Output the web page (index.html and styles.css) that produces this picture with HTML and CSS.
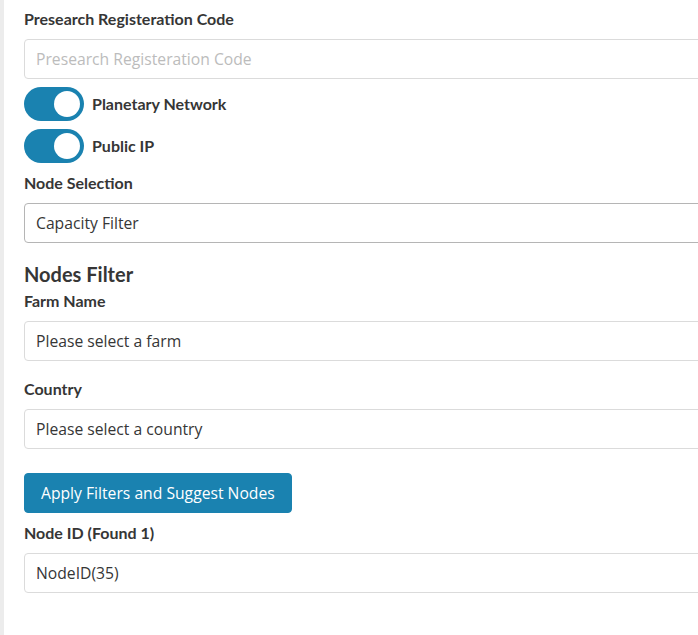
FILE: index.html
```
<!DOCTYPE html>
<html>
<head>
<meta charset="utf-8">
<link rel="stylesheet" href="styles.css">
</head>
<body>
<div class="page">
  <form class="form">
    <label class="label">Presearch Registeration Code</label>
    <input class="input" type="text" placeholder="Presearch Registeration Code">

    <div class="toggle-row first">
      <span class="switch"><span class="knob"></span></span>
      <span class="toggle-label">Planetary Network</span>
    </div>
    <div class="toggle-row">
      <span class="switch"><span class="knob"></span></span>
      <span class="toggle-label">Public IP</span>
    </div>

    <label class="label sel-label">Node Selection</label>
    <div class="input select">Capacity Filter</div>

    <h3 class="heading">Nodes Filter</h3>
    <label class="label farm-label">Farm Name</label>
    <div class="input">Please select a farm</div>

    <label class="label country-label">Country</label>
    <div class="input">Please select a country</div>

    <button class="btn" type="button">Apply Filters and Suggest Nodes</button>

    <label class="label node-label">Node ID (Found 1)</label>
    <div class="input">NodeID(35)</div>
  </form>
</div>
</body>
</html>
```
FILE: styles.css
```
html, body {
  margin: 0;
  padding: 0;
  overflow: hidden;
  background: #ffffff;
}
.page {
  border-left: 4px solid #ececec;
  min-height: 635px;
  box-sizing: border-box;
  padding: 8px 0 0 20px;
}
.form {
  display: flex;
  flex-direction: column;
  align-items: flex-start;
  width: 760px;
}
.label {
  display: block;
  font-family: "Lato", "Liberation Sans", sans-serif;
  font-weight: 700;
  font-size: 16px;
  line-height: 22px;
  color: #363636;
  margin-bottom: 9px;
}
.input {
  box-sizing: border-box;
  width: 100%;
  height: 40px;
  border: 1px solid #dbdbdb;
  border-radius: 4px;
  padding: 0 11px;
  font-family: "Open Sans", "Lato", sans-serif;
  font-size: 15.7px;
  line-height: 38px;
  color: #363636;
  background: #fff;
  outline: none;
  margin: 0;
}
.input::placeholder {
  color: #bcbcbc;
}
.select {
  border-color: #b5b5b5;
}
.toggle-row {
  display: flex;
  align-items: center;
  gap: 8px;
  margin-top: 8px;
}
.switch {
  position: relative;
  display: block;
  width: 60px;
  height: 34px;
  border-radius: 17px;
  background: #1a82b0;
}
.knob {
  position: absolute;
  top: 4px;
  left: 30px;
  width: 26px;
  height: 26px;
  border-radius: 50%;
  background: #fff;
}
.toggle-label {
  font-family: "Lato", "Liberation Sans", sans-serif;
  font-weight: 700;
  font-size: 16px;
  line-height: 22px;
  color: #363636;
}
.sel-label { margin-top: 9px; }
.heading {
  margin: 19px 0 4px;
  font-family: "Lato", "Liberation Sans", sans-serif;
  font-weight: 700;
  font-size: 20px;
  line-height: 24px;
  color: #363636;
}
.country-label { margin-top: 17px; }
.btn {
  margin-top: 24px;
  height: 40px;
  padding: 0 16px;
  border: 1px solid #1a82b0;
  border-radius: 4px;
  background: #1a82b0;
  color: #fff;
  font-family: "Open Sans", "Lato", sans-serif;
  font-size: 15.7px;
  cursor: pointer;
}
.node-label { margin-top: 9px; }
```
